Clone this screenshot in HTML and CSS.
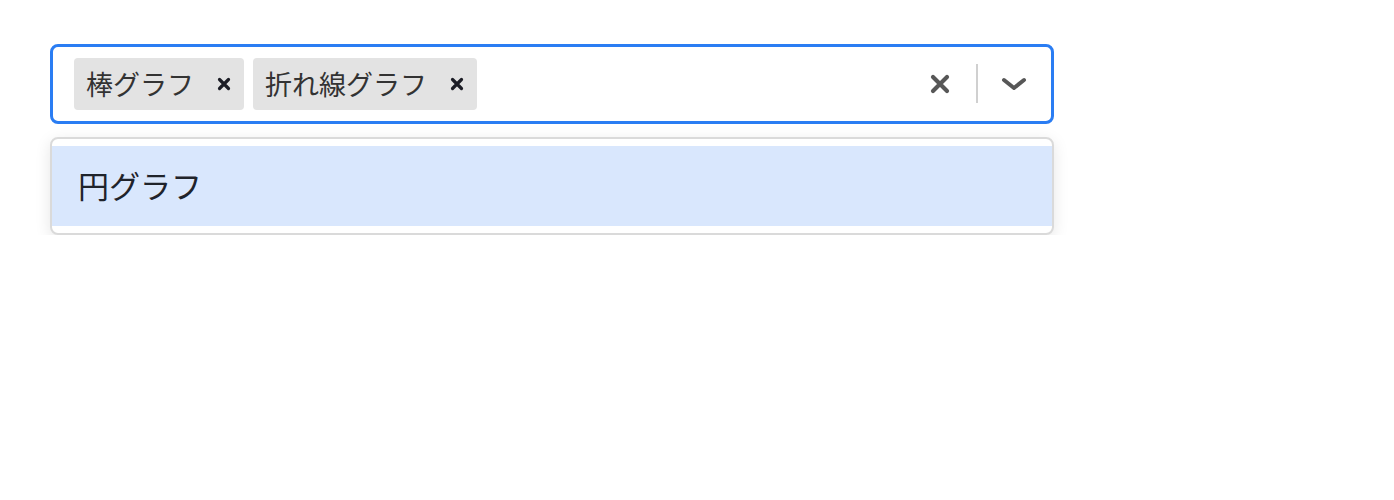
FILE: index.html
```html
<!DOCTYPE html>
<html lang="ja">
<head>
<meta charset="utf-8">
<title>Select</title>
<link rel="stylesheet" href="styles.css">
</head>
<body>
<div class="page">
  <div class="select">
    <div class="control">
      <div class="values">
        <div class="chip">
          <span class="chip-label">棒グラフ</span>
          <span class="chip-remove">
            <svg width="14" height="14" viewBox="0 0 14 14"><path d="M2.5 2.5 L11.5 11.5 M11.5 2.5 L2.5 11.5" stroke="#1c1d26" stroke-width="3.2" stroke-linecap="round"/></svg>
          </span>
        </div>
        <div class="chip">
          <span class="chip-label">折れ線グラフ</span>
          <span class="chip-remove">
            <svg width="14" height="14" viewBox="0 0 14 14"><path d="M2.5 2.5 L11.5 11.5 M11.5 2.5 L2.5 11.5" stroke="#1c1d26" stroke-width="3.2" stroke-linecap="round"/></svg>
          </span>
        </div>
      </div>
      <div class="indicators">
        <span class="indicator">
          <svg width="22" height="22" viewBox="0 0 22 22"><path d="M4 4 L18 18 M18 4 L4 18" stroke="#575757" stroke-width="4.2" stroke-linecap="round"/></svg>
        </span>
        <span class="separator"></span>
        <span class="indicator">
          <svg width="26" height="14" viewBox="0 0 26 14"><path d="M3 3 L13 11 L23 3" fill="none" stroke="#575757" stroke-width="4" stroke-linecap="round" stroke-linejoin="round"/></svg>
        </span>
      </div>
    </div>
    <div class="menu">
      <div class="option">円グラフ</div>
    </div>
  </div>
</div>
</body>
</html>
```
FILE: styles.css
```css
html, body {
  margin: 0;
  padding: 0;
  background: #ffffff;
}
body {
  font-family: "Noto Sans CJK JP", "Noto Sans", sans-serif;
}
.page {
  padding: 44px 0 0 50px;
}
.select {
  width: 1004px;
}
.control {
  box-sizing: border-box;
  height: 80px;
  border: 3px solid #2a7df3;
  border-radius: 8px;
  display: flex;
  align-items: center;
  padding: 0 17px 0 21px;
  background: #fff;
}
.values {
  flex: 1;
  display: flex;
  align-items: center;
  gap: 9px;
}
.chip {
  display: flex;
  align-items: center;
  height: 52px;
  background: #e3e3e3;
  border-radius: 4px;
}
.chip-label {
  font-size: 27px;
  line-height: 52px;
  color: #333333;
  padding: 0 9px 0 12px;
}
.chip-remove {
  width: 41px;
  height: 52px;
  display: flex;
  align-items: center;
  justify-content: center;
}
.indicators {
  display: flex;
  align-items: stretch;
  height: 100%;
}
.indicator {
  width: 40px;
  display: flex;
  align-items: center;
  justify-content: center;
}
.separator {
  width: 2px;
  background: #d0d0d0;
  margin: 17px 16px 18px 16px;
}
.menu {
  box-sizing: border-box;
  margin-top: 13px;
  border: 2px solid #dadada;
  border-radius: 8px;
  padding: 7px 0;
  background: #fff;
  box-shadow: 0 4px 16px rgba(0, 0, 0, 0.1);
}
.option {
  height: 80px;
  line-height: 78px;
  padding-left: 26px;
  font-size: 31px;
  color: #1f232b;
  background: #d9e7fd;
}
```
